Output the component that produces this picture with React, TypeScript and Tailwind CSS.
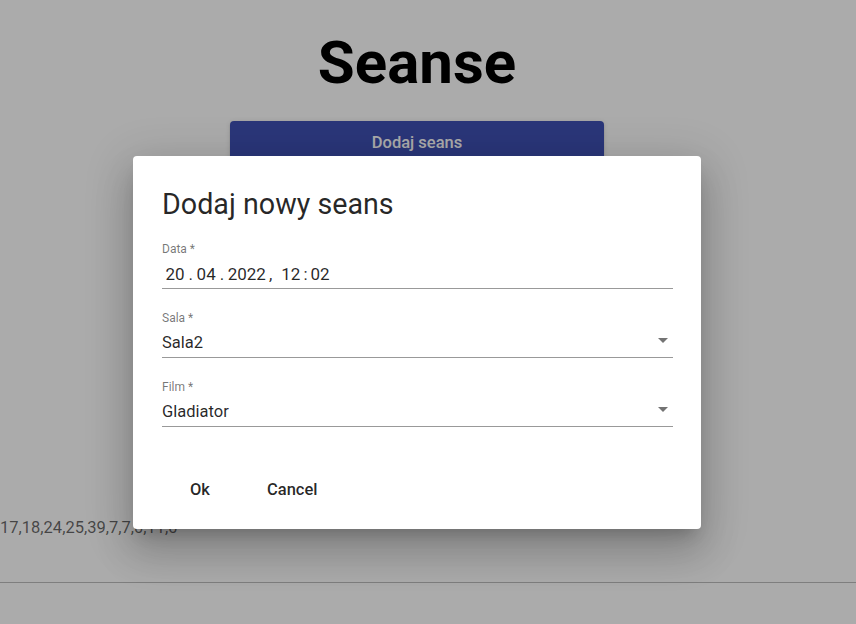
import { useState } from "react";

function ArrowDrop() {
  return (
    <svg width="24" height="24" viewBox="0 0 24 24" className="-mr-[2px] -translate-y-[3px] shrink-0 fill-black/55">
      <path d="M7 10l5 5 5-5z" />
    </svg>
  );
}

function SelectField({ label, value }: { label: string; value: string }) {
  return (
    <div className="mt-[21px]">
      <div className="text-[12px] leading-[16px] text-black/55">{label} *</div>
      <div className="mt-[5px] flex items-center justify-between border-b border-black/40 pb-[2px]">
        <span className="text-[16.5px] leading-[24px] text-black/85">{value}</span>
        <ArrowDrop />
      </div>
    </div>
  );
}

export default function App() {
  const [sala] = useState("Sala2");
  const [film] = useState("Gladiator");

  return (
    <div className="relative min-h-[624px] w-full overflow-hidden bg-white" style={{ fontFamily: "Roboto, 'Liberation Sans', sans-serif" }}>
      {/* page underneath */}
      <div className="flex flex-col items-center pr-[22px]">
        <h1 className="mt-[27px] text-[60px] font-bold leading-[72px] text-black">Seanse</h1>
        <button className="mt-[22px] h-[44px] w-[374px] rounded bg-[#3f51b5] text-[16.5px] font-medium text-white shadow-[0px_3px_1px_-2px_rgba(0,0,0,0.2),0px_2px_2px_0px_rgba(0,0,0,0.14),0px_1px_5px_0px_rgba(0,0,0,0.12)]">
          Dodaj seans
        </button>
      </div>
      <div className="mt-[351px] whitespace-nowrap text-[16.5px] leading-[24px] text-black/60">
        17,18,24,25,39,7,7,0,11,0
      </div>
      <div className="mt-[42px] border-b border-[#bdbdbd]" />

      {/* backdrop */}
      <div className="absolute inset-0 bg-black/[0.33]" />

      {/* dialog */}
      <div className="absolute left-[133px] top-[156px] flex h-[373px] w-[568px] flex-col rounded bg-white pl-[29px] pr-[28px] shadow-[0px_11px_15px_-7px_rgba(0,0,0,0.2),0px_24px_38px_3px_rgba(0,0,0,0.14),0px_9px_46px_8px_rgba(0,0,0,0.12)]">
        <h2 className="pt-[30px] text-[28.7px] leading-[36px] text-black/85">Dodaj nowy seans</h2>

        <div className="mt-[19px]">
          <div className="text-[12px] leading-[16px] text-black/55">Data *</div>
          <div className="mt-[5px] flex border-b border-black/40 pb-[2px] text-[17px] leading-[24px] text-black/85">
            <span className="ml-[3.5px]">20</span>
            <span className="ml-[4px]">.</span>
            <span className="ml-[3.5px]">04</span>
            <span className="ml-[4px]">.</span>
            <span className="ml-[3.5px]">2022</span>
            <span className="ml-[3px]">,</span>
            <span className="ml-[9px]">12</span>
            <span className="ml-[3px]">:</span>
            <span className="ml-[3px]">02</span>
          </div>
        </div>

        <SelectField label="Sala" value={sala} />
        <SelectField label="Film" value={film} />

        <div className="mt-[45px] flex gap-[27px] pl-[6px]">
          <button className="h-[36px] min-w-[64px] rounded px-[8px] text-[16.5px] font-medium leading-[24px] text-black/85">Ok</button>
          <button className="h-[36px] min-w-[64px] rounded px-[8px] text-[16.5px] font-medium leading-[24px] text-black/85">Cancel</button>
        </div>
      </div>
    </div>
  );
}
